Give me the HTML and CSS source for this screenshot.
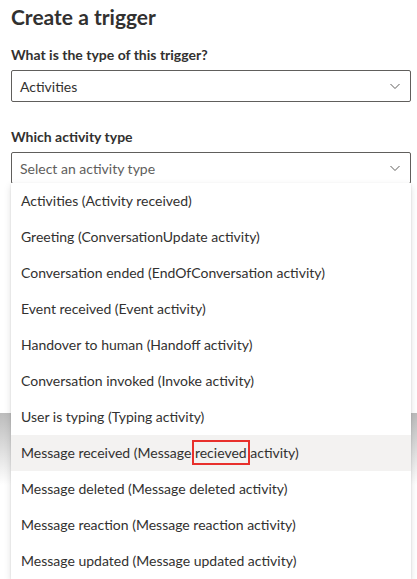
FILE: index.html
```html
<!DOCTYPE html>
<html lang="en">
<head>
<meta charset="utf-8">
<title>Create a trigger</title>
<link rel="stylesheet" href="styles.css">
</head>
<body>
<div class="page">
  <h1 class="title">Create a trigger</h1>
  <div class="field">
    <label class="label">What is the type of this trigger?</label>
    <div class="select">
      <span class="value">Activities</span>
      <svg class="chev" width="12" height="12" viewBox="0 0 12 12"><path d="M1.5 4 L6 8.5 L10.5 4" fill="none" stroke="#605e5c" stroke-width="1"/></svg>
    </div>
  </div>
  <div class="field field2">
    <label class="label">Which activity type</label>
    <div class="select-wrap">
      <div class="select">
        <span class="value placeholder">Select an activity type</span>
        <svg class="chev" width="12" height="12" viewBox="0 0 12 12"><path d="M1.5 4 L6 8.5 L10.5 4" fill="none" stroke="#605e5c" stroke-width="1"/></svg>
      </div>
      <ul class="menu">
        <li class="item">Activities (Activity received)</li>
        <li class="item">Greeting (ConversationUpdate activity)</li>
        <li class="item">Conversation ended (EndOfConversation activity)</li>
        <li class="item">Event received (Event activity)</li>
        <li class="item">Handover to human (Handoff activity)</li>
        <li class="item">Conversation invoked (Invoke activity)</li>
        <li class="item">User is typing (Typing activity)</li>
        <li class="item item-hover">Message received (Message <span class="mark">recieved</span> activity)</li>
        <li class="item">Message deleted (Message deleted activity)</li>
        <li class="item">Message reaction (Message reaction activity)</li>
        <li class="item">Message updated (Message updated activity)</li>
      </ul>
    </div>
  </div>
</div>
</body>
</html>
```

FILE: styles.css
```css
html, body {
  margin: 0;
  padding: 0;
}
body {
  width: 417px;
  height: 579px;
  overflow: hidden;
  font-family: "Segoe UI", "Lato", "Liberation Sans", sans-serif;
  color: #323130;
  background:
    linear-gradient(to bottom, #ffffff 0, #ffffff 413px, #bcbcbc 413px, #ffffff 485px, #ffffff 100%);
}
.page {
  padding: 3px 6px 0 11px;
}
.title {
  margin: 0;
  font-size: 21px;
  line-height: 28px;
  font-weight: 700;
  color: #323130;
}
.field {
  margin-top: 14px;
}
.field2 {
  margin-top: 25px;
}
.label {
  display: block;
  font-size: 14px;
  line-height: 20px;
  font-weight: 700;
  margin-bottom: 5px;
}
.select {
  box-sizing: border-box;
  height: 32px;
  border: 1px solid #605e5c;
  border-radius: 2px;
  display: flex;
  align-items: center;
  justify-content: space-between;
  padding: 0 9px 0 8px;
  font-size: 14px;
  background: #fff;
}
.placeholder {
  color: #605e5c;
}
.chev {
  display: block;
}
.select-wrap {
  position: relative;
}
.menu {
  position: absolute;
  left: 0;
  right: 0;
  top: 31px;
  margin: 0;
  padding: 0;
  list-style: none;
  background: #fff;
  box-shadow: 0 3.2px 7.2px rgba(0,0,0,0.132), 0 0.6px 1.8px rgba(0,0,0,0.108);
}
.item {
  height: 36px;
  line-height: 36px;
  padding: 0 10px;
  font-size: 14px;
  color: #323130;
  white-space: nowrap;
}
.item-hover {
  background: #f3f2f1;
}
.mark {
  padding: 1px 0;
  outline: 2px solid #e8302c;
  outline-offset: 1px;
}
```
